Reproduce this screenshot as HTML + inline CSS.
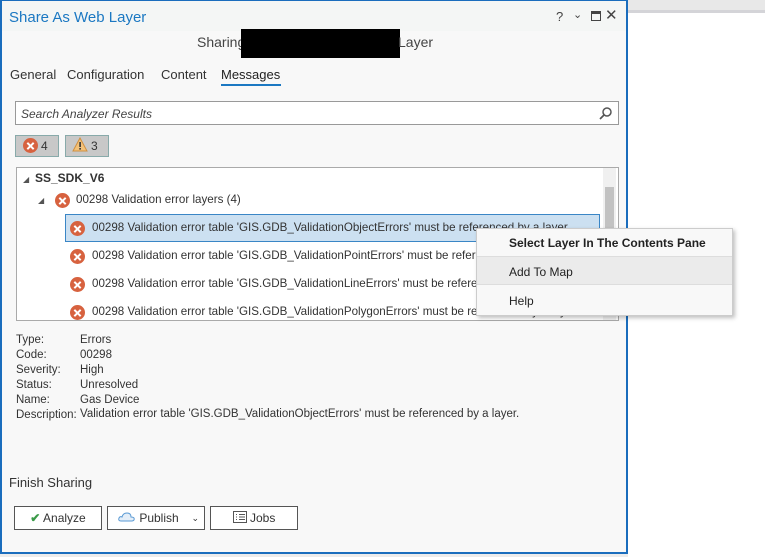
<!DOCTYPE html>
<html><head><style>
*{margin:0;padding:0;box-sizing:border-box}
body{width:765px;height:557px;background:#fff;font-family:"Liberation Sans",sans-serif;position:relative;overflow:hidden;color:#333}
.a{position:absolute;white-space:nowrap}
.dlg{position:absolute;left:0;top:0;width:628px;height:555px;background:#f8f8f8;border:2px solid #1a6dbd;border-top:1px solid #1a6dbd}
.err{display:inline-block;width:15px;height:15px;border-radius:50%;background:#d7623f;position:absolute}
.err:before,.err:after{content:"";position:absolute;left:3px;top:6.5px;width:9px;height:2px;background:#fff;transform:rotate(45deg)}
.err:after{transform:rotate(-45deg)}
.row{font-size:11.6px;color:#333}
.btn{position:absolute;top:506px;height:24px;border:1px solid #555;background:#fff;font-size:12px;text-align:center;line-height:22px}
</style></head><body>
<div class="a" style="left:628px;top:0;width:137px;height:13px;background:#e8e8e8;border-bottom:3px solid #d4d4d8"></div>
<div class="a" style="left:0;top:553px;width:628px;height:4px;background:#ececec"></div>
<div class="dlg" style="height:554px"></div>
<div class="a" style="left:2px;top:1px;width:624px;height:30px;background:#f4f6f5"></div>
<div class="a" style="left:9px;top:9px;font-size:15px;color:#1b78c2">Share As Web Layer</div>
<div class="a" style="left:556px;top:9px;font-size:13px;color:#444">?</div>
<div class="a" style="left:573px;top:8px;font-size:11px;color:#444">&#8964;</div>
<div class="a" style="left:591px;top:11px;width:10px;height:10px;border:1px solid #444;border-top:3px solid #444"></div>
<div class="a" style="left:605px;top:6px;font-size:15px;color:#444">&#10005;</div>
<div class="a" style="left:197px;top:34px;font-size:14px;color:#444">Sharing</div>
<div class="a" style="left:241px;top:29px;width:159px;height:29px;background:#000"></div>
<div class="a" style="left:398px;top:34px;font-size:14px;color:#444">Layer</div>
<div class="a" style="left:10px;top:67px;font-size:13px;color:#333">General</div>
<div class="a" style="left:67px;top:67px;font-size:13px;color:#333">Configuration</div>
<div class="a" style="left:161px;top:67px;font-size:13px;color:#333">Content</div>
<div class="a" style="left:221px;top:67px;font-size:13px;color:#222">Messages</div>
<div class="a" style="left:221px;top:84px;width:60px;height:2px;background:#1b78c2"></div>
<div class="a" style="left:15px;top:101px;width:604px;height:24px;background:#fff;border:1px solid #999"></div>
<div class="a" style="left:21px;top:107px;font-size:12px;font-style:italic;color:#444">Search Analyzer Results</div>
<svg class="a" style="left:599px;top:106px" width="14" height="14"><circle cx="8" cy="6" r="4" fill="none" stroke="#555" stroke-width="1.5"/><line x1="5" y1="9" x2="1" y2="13" stroke="#555" stroke-width="1.7"/></svg>
<div class="a" style="left:15px;top:135px;width:44px;height:22px;background:#c8c8c8;border:1px solid #8aa"></div>
<span class="err" style="left:23px;top:138px"></span>
<div class="a" style="left:41px;top:139px;font-size:12px">4</div>
<div class="a" style="left:65px;top:135px;width:44px;height:22px;background:#c8c8c8;border:1px solid #8aa"></div>
<svg class="a" style="left:72px;top:137px" width="16" height="15"><path d="M8 1 L15 14 L1 14 Z" fill="#f3c27a" stroke="#d09040"/><rect x="7.3" y="5" width="1.6" height="5" fill="#333"/><rect x="7.3" y="11" width="1.6" height="1.6" fill="#333"/></svg>
<div class="a" style="left:91px;top:139px;font-size:12px">3</div>
<div class="a" style="left:16px;top:167px;width:603px;height:154px;background:#fff;border:1px solid #aaa;overflow:hidden">
<div class="a" style="left:586px;top:0;width:13px;height:152px;background:#f0f0f0"></div>
<div class="a" style="left:588px;top:19px;width:9px;height:45px;background:#c2c2c2"></div>
<div class="a" style="left:6px;top:7px;font-size:8px;color:#555">&#9698;</div>
<div class="a" style="left:18px;top:3px;font-size:12px;font-weight:bold;color:#333">SS_SDK_V6</div>
<div class="a" style="left:21px;top:28px;font-size:8px;color:#555">&#9698;</div>
<span class="err" style="left:38px;top:25px"></span>
<div class="a row" style="left:59px;top:25px">00298 Validation error layers (4)</div>
<div class="a" style="left:48px;top:46px;width:535px;height:28px;background:#cce0f1;border:1px solid #3a86c6"></div>
<span class="err" style="left:53px;top:53px"></span>
<div class="a row" style="left:75px;top:53px">00298 Validation error table 'GIS.GDB_ValidationObjectErrors' must be referenced by a layer.</div>
<span class="err" style="left:53px;top:81px"></span>
<div class="a row" style="left:75px;top:81px">00298 Validation error table 'GIS.GDB_ValidationPointErrors' must be referenced by a layer.</div>
<span class="err" style="left:53px;top:109px"></span>
<div class="a row" style="left:75px;top:109px">00298 Validation error table 'GIS.GDB_ValidationLineErrors' must be referenced by a layer.</div>
<span class="err" style="left:53px;top:137px"></span>
<div class="a row" style="left:75px;top:137px">00298 Validation error table 'GIS.GDB_ValidationPolygonErrors' must be referenced by a layer.</div>
</div>
<div class="a" style="left:16px;top:333px;font-size:11.5px;line-height:15px;color:#333">Type:<br>Code:<br>Severity:<br>Status:<br>Name:<br>Description:</div>
<div class="a" style="left:80px;top:333px;font-size:11.5px;line-height:15px;color:#333">Errors<br>00298<br>High<br>Unresolved<br>Gas Device</div>
<div class="a" style="left:80px;top:408px;font-size:11.5px;color:#333">Validation error table 'GIS.GDB_ValidationObjectErrors' must be referenced by a layer.</div>
<div class="a" style="left:9px;top:475px;font-size:13px;color:#333">Finish Sharing</div>
<div class="btn" style="left:14px;width:88px"><span style="color:#3a9a48;font-weight:bold">&#10004;</span> Analyze</div>
<div class="btn" style="left:107px;width:98px;text-align:left;padding-left:10px"><svg width="18" height="10" style="vertical-align:0"><path d="M3 9 Q0 9 1 6 Q2 4 4 5 Q5 1 9 1 Q13 1 13 5 Q17 5 16 8 Q15 9 14 9 Z" fill="#e4eef8" stroke="#5a9ad4"/></svg> Publish <span style="position:absolute;right:5px;font-size:9px">&#8964;</span></div>
<div class="btn" style="left:210px;width:88px"><svg width="14" height="12" style="vertical-align:-1px"><rect x="0.5" y="0.5" width="13" height="11" fill="none" stroke="#555"/><path d="M3 3.5h1M3 6h1M3 8.5h1M6 3.5h6M6 6h6M6 8.5h6" stroke="#555"/></svg> Jobs</div>
<div class="a" style="left:476px;top:228px;width:257px;height:88px;background:#f8f8f8;border:1px solid #ccc;box-shadow:2px 2px 4px rgba(0,0,0,.25)"></div>
<div class="a" style="left:509px;top:236px;font-size:12px;font-weight:bold;color:#222">Select Layer In The Contents Pane</div>
<div class="a" style="left:477px;top:256px;width:255px;height:1px;background:#ddd"></div>
<div class="a" style="left:477px;top:257px;width:255px;height:27px;background:#ebebeb"></div>
<div class="a" style="left:509px;top:265px;font-size:12px;color:#222">Add To Map</div>
<div class="a" style="left:477px;top:284px;width:255px;height:1px;background:#ddd"></div>
<div class="a" style="left:509px;top:294px;font-size:12px;color:#222">Help</div>
</body></html>
